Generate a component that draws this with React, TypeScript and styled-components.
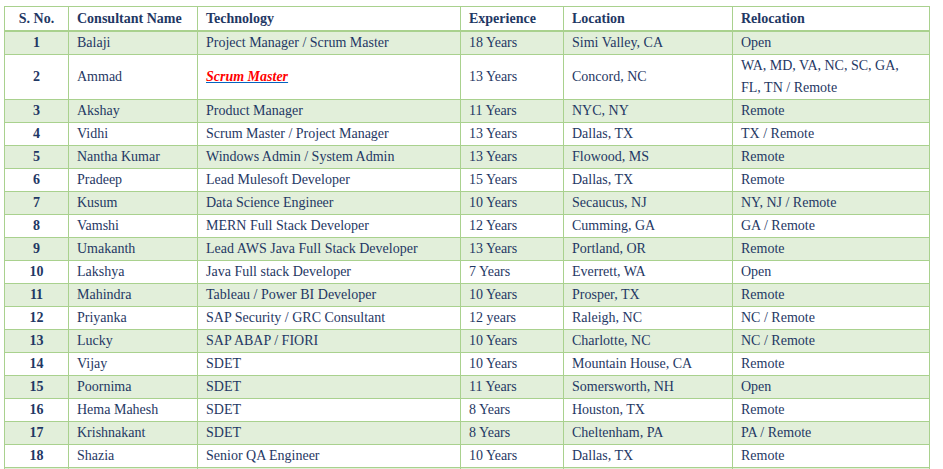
import React from "react";
import styled, { createGlobalStyle } from "styled-components";

const Global = createGlobalStyle`
  html, body { margin: 0; padding: 0; overflow: hidden; background: #ffffff; }
  body { font-family: "Liberation Serif", "Times New Roman", serif; }
`;

const Page = styled.div`
  padding: 6px 4px 0 4px;
`;

const Table = styled.table`
  border-collapse: collapse;
  table-layout: fixed;
  width: 925px;
  font-family: "Liberation Serif", "Times New Roman", serif;
  font-size: 14px;
  color: #1f3864;
`;

const Th = styled.th<{ $center?: boolean }>`
  border: 1px solid #a9d18e;
  border-bottom: 2px solid #a9d18e;
  height: 23px;
  padding: 0 8px;
  line-height: 23px;
  text-align: ${(p) => (p.$center ? "center" : "left")};
  font-weight: bold;
  background: #ffffff;
`;

const Tr = styled.tr<{ $alt: boolean }>`
  background: ${(p) => (p.$alt ? "#e2efda" : "#ffffff")};
`;

const Td = styled.td<{ $num?: boolean }>`
  border: 1px solid #a9d18e;
  padding: 0 8px;
  height: 22px;
  line-height: 22px;
  vertical-align: middle;
  text-align: ${(p) => (p.$num ? "center" : "left")};
  font-weight: ${(p) => (p.$num ? "bold" : "normal")};
`;

const Link = styled.a`
  color: #0563c1;
  text-decoration: underline;
`;

const Hot = styled.span`
  color: #ff0000;
  font-weight: bold;
  font-style: italic;
`;

type Row = [string, string, React.ReactNode, string, string, string];

const rows: Row[] = [
  ["1", "Balaji", "Project Manager / Scrum Master", "18 Years", "Simi Valley, CA", "Open"],
  [
    "2",
    "Ammad",
    <Link href="#">
      <Hot>Scrum Master</Hot>
    </Link>,
    "13 Years",
    "Concord, NC",
    "WA, MD, VA, NC, SC, GA, FL, TN / Remote",
  ],
  ["3", "Akshay", "Product Manager", "11 Years", "NYC, NY", "Remote"],
  ["4", "Vidhi", "Scrum Master / Project Manager", "13 Years", "Dallas, TX", "TX / Remote"],
  ["5", "Nantha Kumar", "Windows Admin / System Admin", "13 Years", "Flowood, MS", "Remote"],
  ["6", "Pradeep", "Lead Mulesoft Developer", "15 Years", "Dallas, TX", "Remote"],
  ["7", "Kusum", "Data Science Engineer", "10 Years", "Secaucus, NJ", "NY, NJ / Remote"],
  ["8", "Vamshi", "MERN Full Stack Developer", "12 Years", "Cumming, GA", "GA / Remote"],
  ["9", "Umakanth", "Lead AWS Java Full Stack Developer", "13 Years", "Portland, OR", "Remote"],
  ["10", "Lakshya", "Java Full stack Developer", "7 Years", "Everrett, WA", "Open"],
  ["11", "Mahindra", "Tableau / Power BI Developer", "10 Years", "Prosper, TX", "Remote"],
  ["12", "Priyanka", "SAP Security / GRC Consultant", "12 years", "Raleigh, NC", "NC / Remote"],
  ["13", "Lucky", "SAP ABAP / FIORI", "10 Years", "Charlotte, NC", "NC / Remote"],
  ["14", "Vijay", "SDET", "10 Years", "Mountain House, CA", "Remote"],
  ["15", "Poornima", "SDET", "11 Years", "Somersworth, NH", "Open"],
  ["16", "Hema Mahesh", "SDET", "8 Years", "Houston, TX", "Remote"],
  ["17", "Krishnakant", "SDET", "8 Years", "Cheltenham, PA", "PA / Remote"],
  ["18", "Shazia", "Senior QA Engineer", "10 Years", "Dallas, TX", "Remote"],
  ["", "", "", "", "", ""],
];

const widths = [64, 129, 263, 103, 169, 197];

export default function App() {
  return (
    <>
      <Global />
      <Page>
        <Table>
          <colgroup>
            {widths.map((w, i) => (
              <col key={i} style={{ width: w }} />
            ))}
          </colgroup>
          <thead>
            <tr>
              <Th $center>S. No.</Th>
              <Th>Consultant Name</Th>
              <Th>Technology</Th>
              <Th>Experience</Th>
              <Th>Location</Th>
              <Th>Relocation</Th>
            </tr>
          </thead>
          <tbody>
            {rows.map((r, i) => (
              <Tr key={i} $alt={i % 2 === 0}>
                <Td $num>{r[0]}</Td>
                <Td>{r[1]}</Td>
                <Td>{r[2]}</Td>
                <Td>{r[3]}</Td>
                <Td>{r[4]}</Td>
                <Td>{r[5]}</Td>
              </Tr>
            ))}
          </tbody>
        </Table>
      </Page>
    </>
  );
}
